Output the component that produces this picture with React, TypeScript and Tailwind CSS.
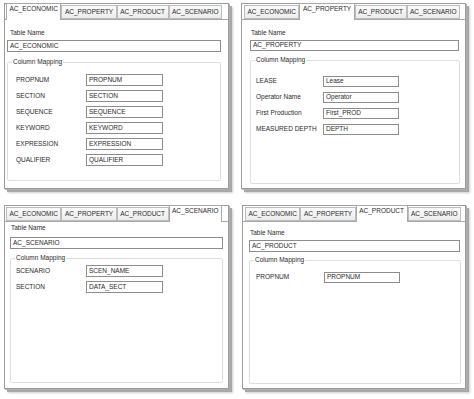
import React from 'react';

const TABS = ['AC_ECONOMIC', 'AC_PROPERTY', 'AC_PRODUCT', 'AC_SCENARIO'];

interface PanelCfg {
  active: number;
  table: string;
  rows: [string, string][];
  frame: string;
  tabs: string;
  body: string;
  nameLabel: string;
  nameBox: string;
  group: string;
  rowsWrap: string;
  label: string;
  input: string;
}

const PANELS: PanelCfg[] = [
  {
    active: 0,
    table: 'AC_ECONOMIC',
    rows: [
      ['PROPNUM', 'PROPNUM'],
      ['SECTION', 'SECTION'],
      ['SEQUENCE', 'SEQUENCE'],
      ['KEYWORD', 'KEYWORD'],
      ['EXPRESSION', 'EXPRESSION'],
      ['QUALIFIER', 'QUALIFIER'],
    ],
    frame: 'w-[225px] h-[186px]',
    tabs: 'pl-[1px]',
    body: 'pl-[2px]',
    nameLabel: 'mt-[9px] pl-[3px]',
    nameBox: 'mt-[3px] h-[12px] w-[214px]',
    group: 'mt-[6px] mb-[7px] w-[214px]',
    rowsWrap: 'pt-[8px] pl-[8px]',
    label: 'w-[70px]',
    input: 'w-[77px] h-[12px]',
  },
  {
    active: 1,
    table: 'AC_PROPERTY',
    rows: [
      ['LEASE', 'Lease'],
      ['Operator Name', 'Operator'],
      ['First Production', 'First_PROD'],
      ['MEASURED DEPTH', 'DEPTH'],
    ],
    frame: 'w-[225px] h-[186px]',
    tabs: 'pl-[2px]',
    body: 'pl-[8px]',
    nameLabel: 'mt-[9px] pl-[1px]',
    nameBox: 'mt-[3px] h-[11px] w-[209px]',
    group: 'mt-[5px] mb-[4px] w-[210px]',
    rowsWrap: 'pt-[11px] pl-[5px]',
    label: 'w-[67px]',
    input: 'w-[76px] h-[11px]',
  },
  {
    active: 3,
    table: 'AC_SCENARIO',
    rows: [
      ['SCENARIO', 'SCEN_NAME'],
      ['SECTION', 'DATA_SECT'],
    ],
    frame: 'w-[225px] h-[184px]',
    tabs: 'pl-[1px]',
    body: 'pl-[5px]',
    nameLabel: 'mt-[2px] pl-[1px]',
    nameBox: 'mt-[5px] h-[12px] w-[213px]',
    group: 'mt-[5px] mb-[5px] w-[213px]',
    rowsWrap: 'pt-[3px] pl-[5px]',
    label: 'w-[70px]',
    input: 'w-[77px] h-[12px]',
  },
  {
    active: 2,
    table: 'AC_PRODUCT',
    rows: [['PROPNUM', 'PROPNUM']],
    frame: 'ml-[1px] w-[224px] h-[184px]',
    tabs: 'pl-[2px]',
    body: 'pl-[6px]',
    nameLabel: 'mt-[7px] pl-[1px]',
    nameBox: 'mt-[3px] h-[12px] w-[211px]',
    group: 'mt-[4px] mb-[4px] w-[212px]',
    rowsWrap: 'pt-[7px] pl-[6px]',
    label: 'w-[68px]',
    input: 'w-[76px] h-[11px]',
  },
];

const Field: React.FC<{ value: string; className: string }> = ({ value, className }) => (
  <div className={`flex items-center border border-[#8d8d8d] bg-white pl-[2px] leading-none ${className}`}>
    {value}
  </div>
);

const Panel: React.FC<{ cfg: PanelCfg }> = ({ cfg }) => (
  <div
    className={`flex flex-col border border-[#9c9c9c] bg-white shadow-[1px_1px_0_0_#b0b0b0,3px_3px_0_0_#a8a8a8,4px_4px_2px_0_rgba(0,0,0,0.2)] ${cfg.frame}`}
  >
    {/* tab strip */}
    <div className={`flex h-[15px] items-end ${cfg.tabs}`}>
      {TABS.map((t, i) =>
        i === cfg.active ? (
          <div
            key={t}
            className="relative z-10 -mb-px flex h-[17px] items-start border border-b-0 border-[#a9a9a9] bg-white px-[2.5px] pt-[2px] leading-none"
          >
            {t}
          </div>
        ) : (
          <div
            key={t}
            className="flex h-[14px] items-center border border-[#bcbcbc] bg-gradient-to-b from-[#fafafa] to-[#ececec] px-[2.5px] leading-none"
          >
            {t}
          </div>
        ),
      )}
    </div>

    {/* tab page */}
    <div className={`flex flex-1 flex-col border-t border-[#a9a9a9] ${cfg.body}`}>
      <div className={`leading-[8px] ${cfg.nameLabel}`}>Table Name</div>
      <Field value={cfg.table} className={cfg.nameBox} />

      <fieldset className={`flex-1 rounded-[2px] border border-[#dadfe3] ${cfg.group}`}>
        <legend className="ml-[4px] px-[1px] leading-[8px]">Column Mapping</legend>
        <div className={`flex flex-col gap-[4px] ${cfg.rowsWrap}`}>
          {cfg.rows.map(([label, value]) => (
            <div key={label} className="flex h-[12px] items-center">
              <span className={`shrink-0 ${cfg.label}`}>{label}</span>
              <Field value={value} className={cfg.input} />
            </div>
          ))}
        </div>
      </fieldset>
    </div>
  </div>
);

export default function App() {
  return (
    <div className="h-[399px] w-[474px] overflow-hidden bg-white font-['Liberation_Sans',Arial,sans-serif] text-[6.5px] text-[#2a2a2a]">
      <div className="grid grid-cols-[225px_225px] grid-rows-[186px_184px] gap-x-[12px] gap-y-[16px] pl-[4px] pt-[3px]">
        {PANELS.map(p => (
          <Panel key={p.table} cfg={p} />
        ))}
      </div>
    </div>
  );
}
